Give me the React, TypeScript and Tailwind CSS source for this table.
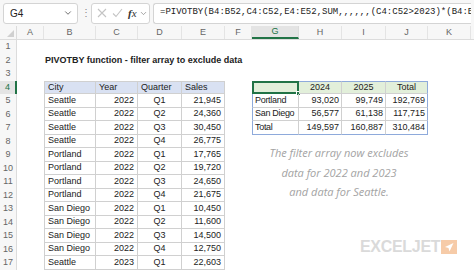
import { ChevronDown } from "lucide-react";

type Cell = { text?: string; cls?: string };

const COLS = [
  { k: "A", w: "w-[27px]" },
  { k: "B", w: "w-[52px]" },
  { k: "C", w: "w-[42px]" },
  { k: "D", w: "w-[44px]" },
  { k: "E", w: "w-[43px]" },
  { k: "F", w: "w-[27px]" },
  { k: "G", w: "w-[47px]" },
  { k: "H", w: "w-[43px]" },
  { k: "I", w: "w-[44px]" },
  { k: "J", w: "w-[42px]" },
  { k: "K", w: "w-[43px]" },
  { k: "", w: "w-[60px]" },
];

const DATA: [string, string, string, string][] = [
  ["Seattle", "2022", "Q1", "21,945"],
  ["Seattle", "2022", "Q2", "24,360"],
  ["Seattle", "2022", "Q3", "30,450"],
  ["Seattle", "2022", "Q4", "26,775"],
  ["Portland", "2022", "Q1", "17,765"],
  ["Portland", "2022", "Q2", "19,720"],
  ["Portland", "2022", "Q3", "24,650"],
  ["Portland", "2022", "Q4", "21,675"],
  ["San Diego", "2022", "Q1", "10,450"],
  ["San Diego", "2022", "Q2", "11,600"],
  ["San Diego", "2022", "Q3", "14,500"],
  ["San Diego", "2022", "Q4", "12,750"],
  ["Seattle", "2023", "Q1", "22,603"],
];

const PIVOT: [string, string, string, string][] = [
  ["", "2024", "2025", "Total"],
  ["Portland", "93,020", "99,749", "192,769"],
  ["San Diego", "56,577", "61,138", "117,715"],
  ["Total", "149,597", "160,887", "310,484"],
];

function getCell(r: number, c: number): Cell {
  // title
  if (r === 2 && c === 1) {
    return { text: "PIVOTBY function - filter array to exclude data", cls: "font-bold whitespace-nowrap overflow-visible pl-[1px]" };
  }
  // source table B4:E17
  if (r >= 4 && r <= 17 && c >= 1 && c <= 4) {
    const head = r === 4;
    const row = head ? ["City", "Year", "Quarter", "Sales"] : DATA[r - 5];
    let align = "justify-start pl-[3px]";
    if (!head && (c === 2 || c === 4)) align = "justify-end pr-[3px]";
    if (!head && c === 3) align = "justify-center";
    let b = "border-r border-b border-[#d0d0d0]";
    if (c === 1) b += " border-l";
    if (head) b += " border-t bg-[#d9e1f2]";
    return { text: row[c - 1], cls: `${align} ${b}` };
  }
  // pivot G4:J7
  if (r >= 4 && r <= 7 && c >= 6 && c <= 9) {
    const head = r === 4;
    const row = PIVOT[r - 4];
    let align = c === 6 ? "justify-start pl-[2px] tracking-[-0.3px]" : "justify-end pr-[2px]";
    if (head && c > 6) align = "justify-center";
    let b = "border-[#d0d0d0]";
    b += c === 9 ? " border-r border-r-[#8eaadb]" : " border-r";
    b += r === 7 ? " border-b border-b-[#8eaadb]" : " border-b";
    if (c === 6) b += " border-l border-l-[#8eaadb]";
    if (head) b += " border-t border-t-[#8eaadb] bg-[#e2efda]";
    return { text: row[c - 6], cls: `${align} ${b}` };
  }
  return {};
}

function FormulaBar() {
  return (
    <div className="h-[26px] bg-[#f7f7f7] flex items-center px-[3px] gap-[3px]">
      <div className="h-[21px] w-[75px] bg-white border border-[#d4d4d4] rounded-[3px] flex items-center justify-between pl-[6px] pr-[4px]">
        <span className="text-[10px] text-[#222]">G4</span>
        <ChevronDown className="w-[10px] h-[10px] text-[#555]" strokeWidth={2} />
      </div>
      <span className="text-[10px] text-[#888] w-[7px] text-center leading-none">⋮</span>
      <div className="h-[21px] w-[59px] bg-white border border-[#d4d4d4] rounded-[3px] flex items-center pl-[4px] gap-[5px]">
        <svg width="10" height="10" viewBox="0 0 10 10" className="ml-[1px]">
          <path d="M1 1 L9 9 M9 1 L1 9" stroke="#c4c4c4" strokeWidth="1.1" fill="none" />
        </svg>
        <svg width="11" height="10" viewBox="0 0 11 10">
          <path d="M1 5.5 L4 8.5 L10 1" stroke="#c4c4c4" strokeWidth="1.1" fill="none" />
        </svg>
        <span className="text-[11px] italic text-[#333] font-['Liberation_Serif',serif] leading-none">
          <span className="font-bold">f</span>x
        </span>
        <ChevronDown className="w-[9px] h-[9px] text-[#888] -ml-[3px]" strokeWidth={2} />
      </div>
      <div className="h-[21px] flex-1 min-w-0 bg-white border border-[#d4d4d4] rounded-l-[3px] border-r-0 flex items-center pl-[6px] overflow-hidden">
        <span className="whitespace-nowrap text-[9px] text-[#222] font-['Liberation_Mono',monospace]">
          =PIVOTBY(B4:B52,C4:C52,E4:E52,SUM,,,,,,(C4:C52&gt;2023)*(B4:B5
        </span>
      </div>
    </div>
  );
}

function ColumnHeaders() {
  return (
    <div className="flex h-[14px] bg-[#f7f7f7] border-b border-[#dcdcdc]">
      <div className="w-[17px] shrink-0 border-r border-[#dcdcdc] relative">
        <svg width="7" height="7" viewBox="0 0 7 7" className="absolute right-[2px] bottom-[2px]">
          <path d="M7 0 L7 7 L0 7 Z" fill="#d0d0d0" />
        </svg>
      </div>
      {COLS.map((c, i) => {
        const sel = c.k === "G";
        return (
          <div
            key={i}
            className={`${c.w} shrink-0 flex items-center justify-center text-[9px] ${
              sel
                ? "bg-[#e4e4e4] text-[#217346] border-b-2 border-[#217346] border-r border-r-[#dcdcdc]"
                : "text-[#666] border-r border-[#e4e4e4]"
            }`}
          >
            {c.k}
          </div>
        );
      })}
    </div>
  );
}

export default function App() {
  const rows = Array.from({ length: 17 }, (_, i) => i + 1);
  return (
    <div className="w-[474px] h-[270px] overflow-hidden bg-white font-['Liberation_Sans',Arial,sans-serif] relative">
      <FormulaBar />
      <ColumnHeaders />
      <div className="flex flex-col">
        {rows.map((r) => (
          <div key={r} className="flex h-[13.5px]">
            <div
              className={`w-[17px] shrink-0 flex items-center justify-center text-[9px] ${
                r === 4
                  ? "bg-[#e4e4e4] text-[#217346] border-r-2 border-[#217346]"
                  : "bg-[#f7f7f7] text-[#666] border-r border-[#dcdcdc]"
              }`}
            >
              {r}
            </div>
            {COLS.map((c, ci) => {
              const cell = getCell(r, ci);
              const active = r === 4 && c.k === "G";
              return (
                <div
                  key={ci}
                  className={`${c.w} shrink-0 flex items-center text-[9px] text-[#222] whitespace-nowrap relative ${cell.cls ?? ""}`}
                >
                  {cell.text}
                  {active && (
                    <>
                      <div className="absolute -left-[1px] -top-[1px] -right-[1px] -bottom-[1px] border-2 border-[#217346]" />
                      <div className="absolute -right-[3px] -bottom-[3px] w-[5px] h-[5px] bg-[#217346] border border-white" />
                    </>
                  )}
                </div>
              );
            })}
          </div>
        ))}
      </div>

      {/* note floating over the sheet */}
      <div className="absolute left-[249px] top-[143px] w-[180px] text-center text-[11px] leading-[19.5px] italic text-[#a3a3a3] font-['Open_Sans',sans-serif]">
        <div>The filter array now excludes</div>
        <div>data for 2022 and 2023</div>
        <div>and data for Seattle.</div>
      </div>

      {/* logo */}
      <div className="absolute left-[360px] top-[239px] flex items-center gap-[1px]">
        <span className="text-[16px] font-bold tracking-[-0.3px] text-[#dadada] leading-none">EXCELJET</span>
        <svg width="16" height="14" viewBox="0 0 16 14">
          <rect x="0" y="0" width="16" height="14" fill="#f6cba8" />
          <path d="M12.5 3 L4 7 L7.5 8 L8.5 11.5 Z" fill="#ffffff" />
        </svg>
      </div>
    </div>
  );
}
